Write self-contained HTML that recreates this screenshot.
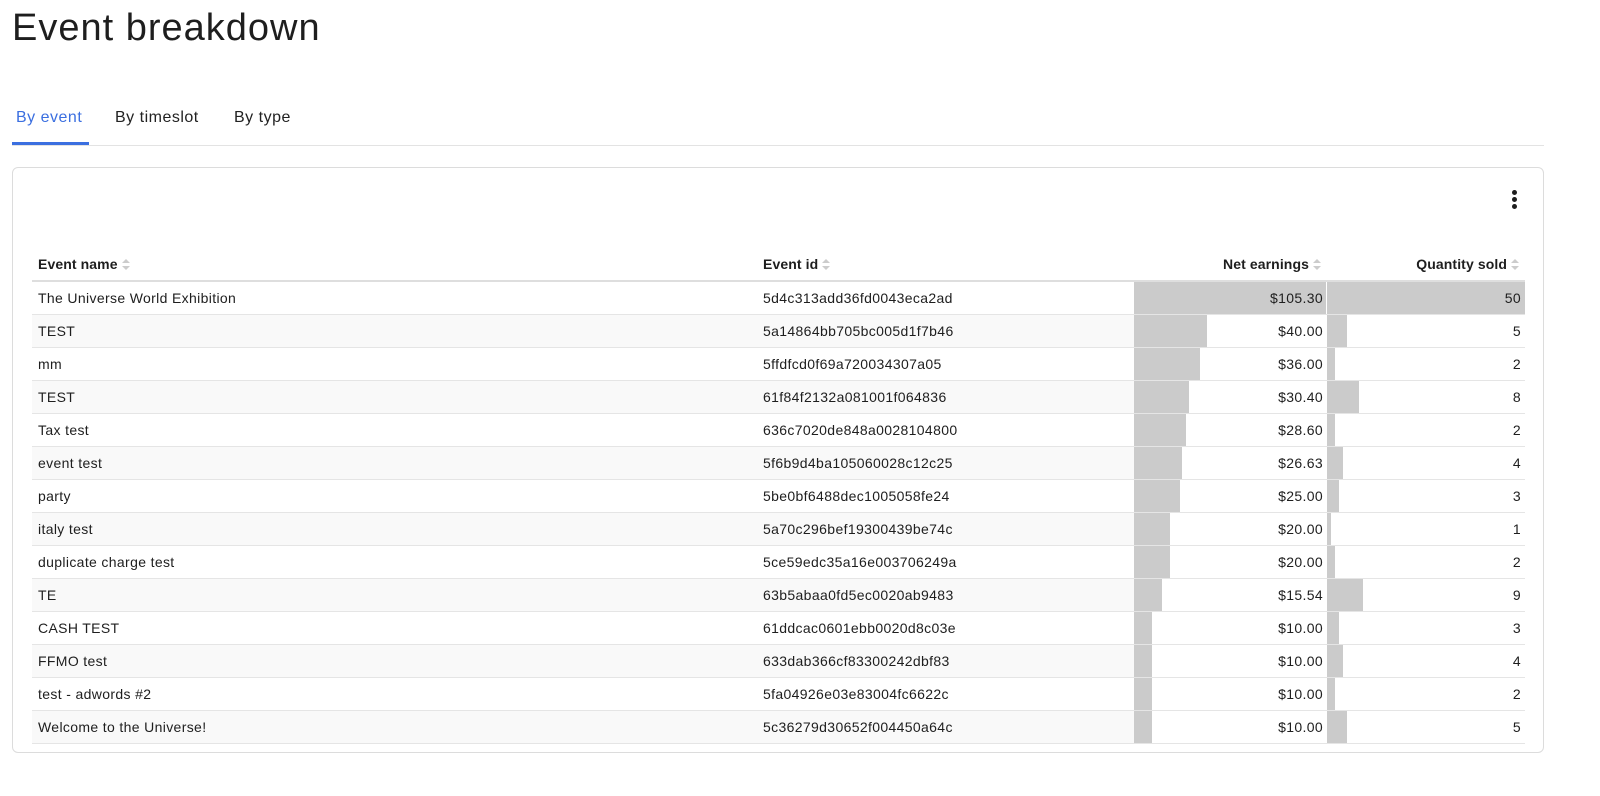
<!DOCTYPE html>
<html><head><meta charset="utf-8"><style>
*{box-sizing:border-box;margin:0;padding:0}
body{width:1600px;height:796px;background:#fff;font-family:"Liberation Sans",sans-serif;color:#1e1e1e;position:relative;overflow:hidden}
h1{position:absolute;left:12px;top:7px;font-size:38px;font-weight:400;letter-spacing:1px;color:#1e1e1e}
.tab{position:absolute;top:109px;font-size:16px;color:#222;letter-spacing:0.5px}
.line{position:absolute;left:12px;top:145px;width:1532px;height:1px;background:#e3e3e3}
.ul{position:absolute;left:12px;top:142px;width:77px;height:3px;background:#3b6fe0}
.card{position:absolute;left:12px;top:167px;width:1532px;height:586px;border:1px solid #dcdcdc;border-radius:6px}
.dots{position:absolute;left:1512px;top:190px}
.dots i{display:block;width:5px;height:5px;border-radius:50%;background:#1e1e1e;margin-bottom:2px}
table{position:absolute;left:32px;top:247px;width:1493px;border-collapse:collapse;font-size:14px;letter-spacing:0.35px}
th{height:34px;text-align:left;font-weight:700;padding:0 6px;border-bottom:2px solid #dedede;font-size:14px;letter-spacing:0.1px}
td{height:33px;padding:0 6px;border-bottom:1px solid #e5e5e5;position:relative}
tr:nth-child(odd) td{background:#f9f9f9}
th.r,td.r{text-align:right}
td.bar{padding:0;background:#fff!important}
td.bar .b{position:absolute;left:0;top:0;bottom:0;background:#cbcbcb}
td.bar span{position:relative;display:block;text-align:right;padding-right:4px}
.s{display:inline-block;width:8px;height:11px;vertical-align:-1px;margin-left:4px}
</style></head><body>
<h1>Event breakdown</h1>
<div class="tab" style="left:16px;color:#3b6fe0">By event</div>
<div class="tab" style="left:115px">By timeslot</div>
<div class="tab" style="left:234px">By type</div>
<div class="line"></div><div class="ul"></div>
<div class="card"></div>
<div class="dots"><i></i><i></i><i></i></div>
<table>
<colgroup><col style="width:725px"><col style="width:377px"><col style="width:193px"><col style="width:198px"></colgroup>
<tr><th>Event name<svg class="s" viewBox="0 0 8 11"><path d="M4 0L8 4H0z M4 11L8 7H0z" fill="#ccc"/></svg></th><th>Event id<svg class="s" viewBox="0 0 8 11"><path d="M4 0L8 4H0z M4 11L8 7H0z" fill="#ccc"/></svg></th><th class="r">Net earnings<svg class="s" viewBox="0 0 8 11"><path d="M4 0L8 4H0z M4 11L8 7H0z" fill="#ccc"/></svg></th><th class="r">Quantity sold<svg class="s" viewBox="0 0 8 11"><path d="M4 0L8 4H0z M4 11L8 7H0z" fill="#ccc"/></svg></th></tr>
<tr><td>The Universe World Exhibition</td><td>5d4c313add36fd0043eca2ad</td><td class="bar"><div class="b" style="width:192px"></div><span>$105.30</span></td><td class="bar"><div class="b" style="width:198px"></div><span>50</span></td></tr>
<tr><td>TEST</td><td>5a14864bb705bc005d1f7b46</td><td class="bar"><div class="b" style="width:73px"></div><span>$40.00</span></td><td class="bar"><div class="b" style="width:20px"></div><span>5</span></td></tr>
<tr><td>mm</td><td>5ffdfcd0f69a720034307a05</td><td class="bar"><div class="b" style="width:66px"></div><span>$36.00</span></td><td class="bar"><div class="b" style="width:8px"></div><span>2</span></td></tr>
<tr><td>TEST</td><td>61f84f2132a081001f064836</td><td class="bar"><div class="b" style="width:55px"></div><span>$30.40</span></td><td class="bar"><div class="b" style="width:32px"></div><span>8</span></td></tr>
<tr><td>Tax test</td><td>636c7020de848a0028104800</td><td class="bar"><div class="b" style="width:52px"></div><span>$28.60</span></td><td class="bar"><div class="b" style="width:8px"></div><span>2</span></td></tr>
<tr><td>event test</td><td>5f6b9d4ba105060028c12c25</td><td class="bar"><div class="b" style="width:48px"></div><span>$26.63</span></td><td class="bar"><div class="b" style="width:16px"></div><span>4</span></td></tr>
<tr><td>party</td><td>5be0bf6488dec1005058fe24</td><td class="bar"><div class="b" style="width:46px"></div><span>$25.00</span></td><td class="bar"><div class="b" style="width:12px"></div><span>3</span></td></tr>
<tr><td>italy test</td><td>5a70c296bef19300439be74c</td><td class="bar"><div class="b" style="width:36px"></div><span>$20.00</span></td><td class="bar"><div class="b" style="width:4px"></div><span>1</span></td></tr>
<tr><td>duplicate charge test</td><td>5ce59edc35a16e003706249a</td><td class="bar"><div class="b" style="width:36px"></div><span>$20.00</span></td><td class="bar"><div class="b" style="width:8px"></div><span>2</span></td></tr>
<tr><td>TE</td><td>63b5abaa0fd5ec0020ab9483</td><td class="bar"><div class="b" style="width:28px"></div><span>$15.54</span></td><td class="bar"><div class="b" style="width:36px"></div><span>9</span></td></tr>
<tr><td>CASH TEST</td><td>61ddcac0601ebb0020d8c03e</td><td class="bar"><div class="b" style="width:18px"></div><span>$10.00</span></td><td class="bar"><div class="b" style="width:12px"></div><span>3</span></td></tr>
<tr><td>FFMO test</td><td>633dab366cf83300242dbf83</td><td class="bar"><div class="b" style="width:18px"></div><span>$10.00</span></td><td class="bar"><div class="b" style="width:16px"></div><span>4</span></td></tr>
<tr><td>test - adwords #2</td><td>5fa04926e03e83004fc6622c</td><td class="bar"><div class="b" style="width:18px"></div><span>$10.00</span></td><td class="bar"><div class="b" style="width:8px"></div><span>2</span></td></tr>
<tr><td>Welcome to the Universe!</td><td>5c36279d30652f004450a64c</td><td class="bar"><div class="b" style="width:18px"></div><span>$10.00</span></td><td class="bar"><div class="b" style="width:20px"></div><span>5</span></td></tr>
</table>
</body></html>
